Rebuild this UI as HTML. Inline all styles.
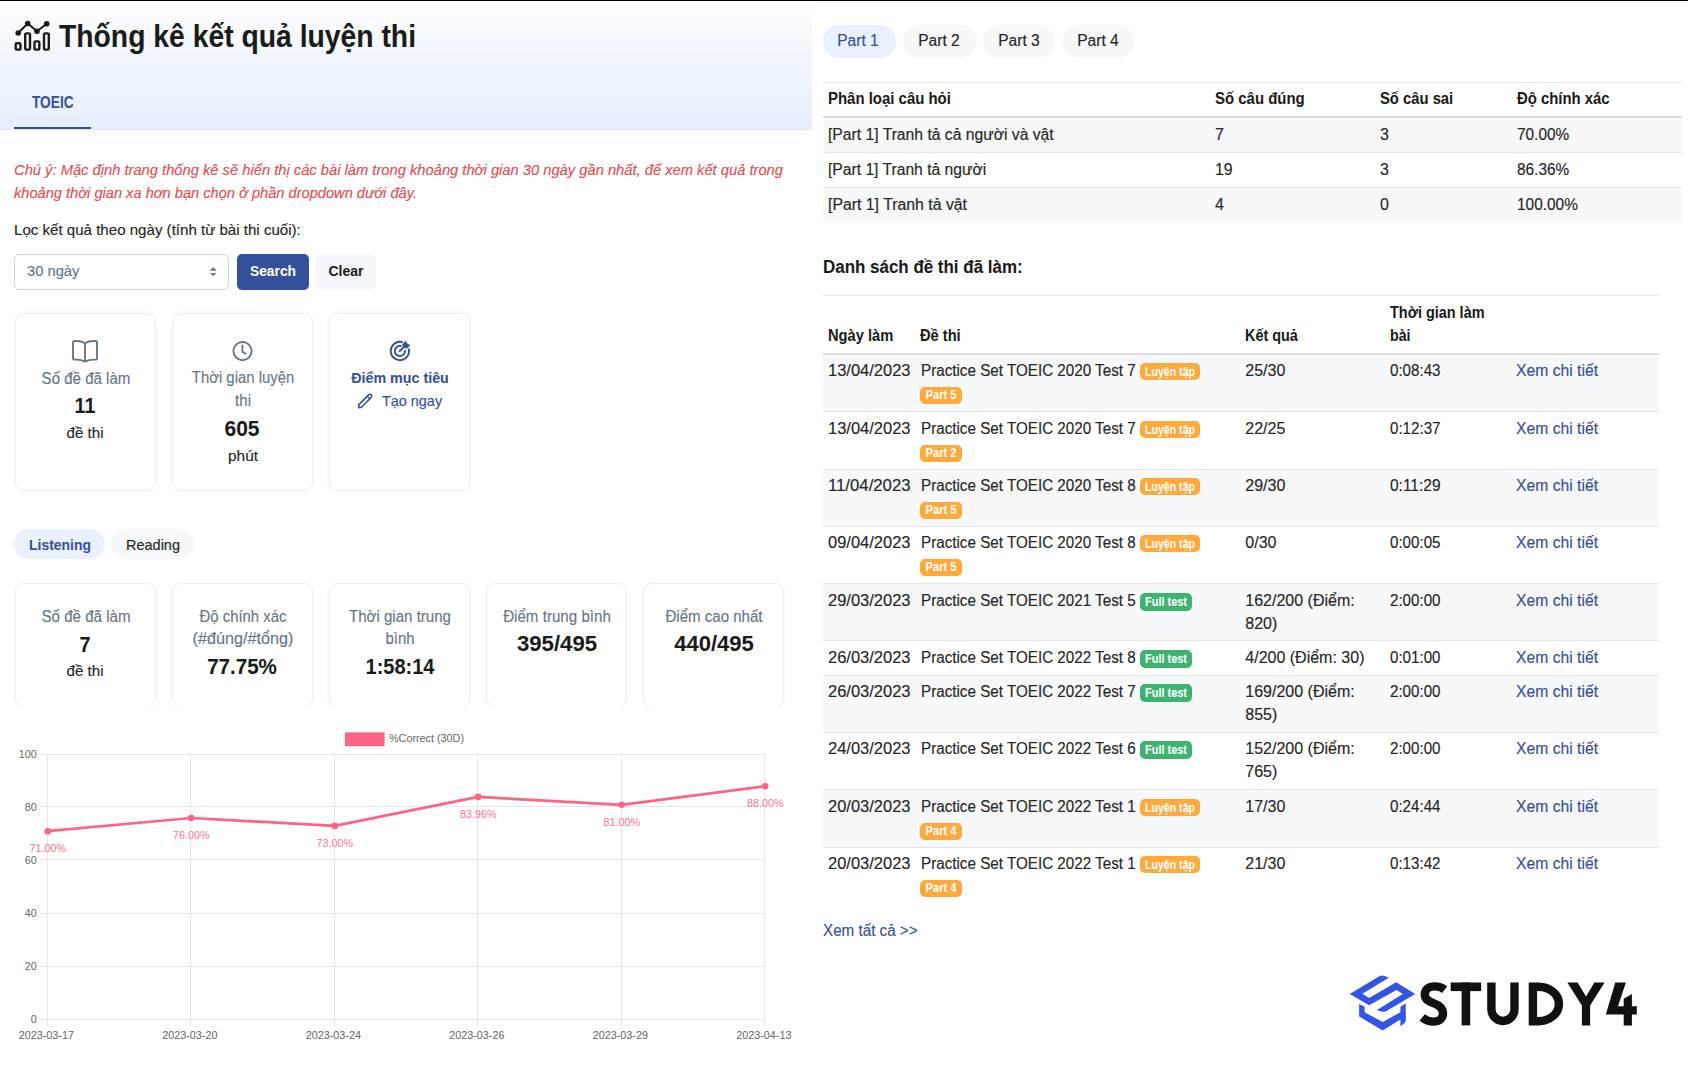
<!DOCTYPE html>
<html lang="vi"><head><meta charset="utf-8"><title>Thống kê kết quả luyện thi</title>
<style>
html,body{margin:0;padding:0;background:#fff;}
body{width:1688px;height:1079px;position:relative;overflow:hidden;font-family:"Liberation Sans", sans-serif;}
.b{position:absolute;display:block;}
.t{position:absolute;white-space:nowrap;display:block;-webkit-text-stroke:0.15px currentColor;}
.t[style*="font-weight:bold"]{-webkit-text-stroke:0.05px currentColor;}
</style></head><body>
<div class="b" style="left:0px;top:0px;width:1688px;height:1px;background:#000"></div>
<div class="b" style="left:0px;top:1px;width:812px;height:128px;background:linear-gradient(180deg,#fdfeff 0%,#f1f6fe 45%,#e5effd 100%);"></div>
<div class="b" style="left:0px;top:129px;width:812px;height:1px;background:#e3e6ea"></div>
<div class="b" style="left:14px;top:127px;width:77px;height:2px;background:#35509a"></div>
<svg class="b" style="left:12px;top:18px" width="42" height="36" viewBox="12 18 42 36">
<g fill="none" stroke="#1a1a1a" stroke-width="2" stroke-linejoin="round">
<polyline points="18.2,33 27.7,23.5 37,31.2 46.7,23.7"/>
<rect x="15.7" y="43.2" width="4.8" height="6.4" rx="1.2" stroke-width="2.4"/>
<rect x="25.2" y="33.4" width="4.8" height="16.2" rx="1.2" stroke-width="2.4"/>
<rect x="34.5" y="41.4" width="4.8" height="8.2" rx="1.2" stroke-width="2.4"/>
<rect x="44" y="33.4" width="4.8" height="16.2" rx="1.2" stroke-width="2.4"/>
</g>
<g fill="#1a1a1a"><circle cx="18.2" cy="33" r="2.8"/><circle cx="27.7" cy="23.5" r="2.8"/><circle cx="37" cy="31.2" r="2.8"/><circle cx="46.7" cy="23.7" r="2.8"/></g>
</svg>
<span id="t1" class="t" style="left:58.60px;top:20px;font-size:32px;line-height:32px;color:#1a1a1a;font-weight:bold;transform-origin:0 0;transform:scaleX(0.8846);">Thống kê kết quả luyện thi</span>
<span id="t2" class="t" style="left:32.30px;top:95px;font-size:16px;line-height:16px;color:#35509a;font-weight:bold;transform-origin:0 0;transform:scaleX(0.8558);">TOEIC</span>
<span id="t3" class="t" style="left:14.00px;top:162px;font-size:15px;line-height:15px;color:#e64c53;font-style:italic;transform-origin:0 0;transform:scaleX(0.9812);">Chú ý: Mặc định trang thống kê sẽ hiển thị các bài làm trong khoảng thời gian 30 ngày gần nhất, để xem kết quả trong</span>
<span id="t4" class="t" style="left:14.00px;top:185px;font-size:15px;line-height:15px;color:#e64c53;font-style:italic;transform-origin:0 0;transform:scaleX(0.9751);">khoảng thời gian xa hơn bạn chọn ở phần dropdown dưới đây.</span>
<span id="t5" class="t" style="left:14.00px;top:222px;font-size:15px;line-height:15px;color:#262626;transform-origin:0 0;transform:scaleX(1.0055);">Lọc kết quả theo ngày (tính từ bài thi cuối):</span>
<div class="b" style="left:14px;top:254px;width:215px;height:36px;background:#fff;border:1px solid #ccd2da;border-radius:5px;box-sizing:border-box"></div>
<span id="t6" class="t" style="left:26.90px;top:263px;font-size:15px;line-height:15px;color:#677788;transform-origin:0 0;transform:scaleX(0.9814);">30 ngày</span>
<svg class="b" style="left:208px;top:265px" width="10" height="13" viewBox="0 0 10 13">
<path d="M1.7 5.8 L5.2 2.1 L8.8 5.8 Z M1.9 7.9 L5.2 11.3 L8.6 7.9 Z" fill="#6a7d94"/></svg>
<div class="b" style="left:237px;top:254px;width:72px;height:36px;background:#35509a;border-radius:5px"></div>
<span id="t7" class="t" style="left:273.00px;top:263px;font-size:15px;line-height:15px;color:#fff;font-weight:bold;transform:translateX(-50%) scaleX(0.9191);">Search</span>
<div class="b" style="left:316px;top:254px;width:60px;height:36px;background:#f5f8fc;border-radius:5px"></div>
<span id="t8" class="t" style="left:346.00px;top:263px;font-size:15px;line-height:15px;color:#1e1e1e;font-weight:bold;transform:translateX(-50%) scaleX(0.9326);">Clear</span>
<div class="b" style="left:15px;top:313px;width:141px;height:178px;background:#fff;border:1px solid #eeeeee;border-radius:9px;box-sizing:border-box;box-shadow:0 0 5px rgba(0,0,0,0.04)"></div>
<div class="b" style="left:172px;top:313px;width:141px;height:178px;background:#fff;border:1px solid #eeeeee;border-radius:9px;box-sizing:border-box;box-shadow:0 0 5px rgba(0,0,0,0.04)"></div>
<div class="b" style="left:329px;top:313px;width:141px;height:178px;background:#fff;border:1px solid #eeeeee;border-radius:9px;box-sizing:border-box;box-shadow:0 0 5px rgba(0,0,0,0.04)"></div>
<svg class="b" style="left:70px;top:339px" width="30" height="24" viewBox="0 0 30 24">
<path d="M15 4.2 C12.5 2.6 9.5 2 6.8 2 H4.6 Q3 2 3 3.6 V19 Q3 20.6 4.6 20.6 H6.8 C9.5 20.6 12.5 21.2 15 22.6 C17.5 21.2 20.5 20.6 23.2 20.6 H25.4 Q27 20.6 27 19 V3.6 Q27 2 25.4 2 H23.2 C20.5 2 17.5 2.6 15 4.2 Z M15 4.2 V22" fill="none" stroke="#677788" stroke-width="1.9" stroke-linejoin="round"/></svg>
<span id="t9" class="t" style="left:85.50px;top:371px;font-size:16px;line-height:16px;color:#677788;transform:translateX(-50%) scaleX(0.9419);">Số đề đã làm</span>
<span id="t10" class="t" style="left:85.00px;top:395px;font-size:22px;line-height:22px;color:#1a1a1a;font-weight:bold;transform:translateX(-50%) scaleX(0.8940);">11</span>
<span id="t11" class="t" style="left:85.30px;top:425px;font-size:15px;line-height:15px;color:#262626;transform:translateX(-50%) scaleX(1.0081);">đề thi</span>
<svg class="b" style="left:230px;top:339px" width="25" height="25" viewBox="0 0 25 25">
<circle cx="12.5" cy="12.1" r="9.1" fill="none" stroke="#677788" stroke-width="1.9"/>
<path d="M12.4 6.5 V12.7 L15.5 14.8" fill="none" stroke="#677788" stroke-width="1.9" stroke-linecap="round" stroke-linejoin="round"/></svg>
<span id="t12" class="t" style="left:243.10px;top:370px;font-size:16px;line-height:16px;color:#677788;transform:translateX(-50%) scaleX(0.9300);">Thời gian luyện</span>
<span id="t13" class="t" style="left:242.50px;top:393px;font-size:16px;line-height:16px;color:#677788;transform:translateX(-50%) scaleX(0.9464);">thi</span>
<span id="t14" class="t" style="left:242.30px;top:418px;font-size:22px;line-height:22px;color:#1a1a1a;font-weight:bold;transform:translateX(-50%) scaleX(0.9532);">605</span>
<span id="t15" class="t" style="left:242.50px;top:448px;font-size:15px;line-height:15px;color:#262626;transform:translateX(-50%) scaleX(1.0273);">phút</span>
<svg class="b" style="left:387px;top:338px" width="26" height="26" viewBox="0 0 26 26">
<g fill="none" stroke="#35509a" stroke-width="1.85" stroke-linecap="round">
<path d="M21.9 11.09 A9.2 9.2 0 1 1 14.81 4.0"/>
<path d="M17.98 12.56 A5.1 5.1 0 1 1 13.79 7.98"/>
<path d="M12.7 13 L17.3 8.6"/>
</g>
<path d="M18.5 3.2 L19.9 5.5 L22.9 7.4 L19.9 10.3 L16.2 9.1 L15.6 6.3 Z" fill="#35509a" stroke="#35509a" stroke-width="0.6" stroke-linejoin="round"/>
</svg>
<span id="t16" class="t" style="left:399.50px;top:370px;font-size:15px;line-height:15px;color:#35509a;font-weight:bold;transform:translateX(-50%) scaleX(0.9529);">Điểm mục tiêu</span>
<svg class="b" style="left:355px;top:391px" width="20" height="20" viewBox="0 0 20 20">
<path d="M3.6 16.6 L3.9 13.6 L13.6 3.9 Q14.9 2.6 16.2 3.9 Q17.5 5.2 16.2 6.5 L6.5 16.2 Z M12.2 5.3 L14.8 7.9" fill="none" stroke="#35509a" stroke-width="1.6" stroke-linejoin="round"/></svg>
<span id="t17" class="t" style="left:381.70px;top:393px;font-size:15px;line-height:15px;color:#35509a;transform-origin:0 0;transform:scaleX(0.9609);">Tạo ngay</span>
<div class="b" style="left:14px;top:529px;width:91px;height:30px;background:#e8f1fd;border-radius:15px"></div>
<span id="t18" class="t" style="left:59.50px;top:537px;font-size:15px;line-height:15px;color:#35509a;font-weight:bold;transform:translateX(-50%) scaleX(0.9269);">Listening</span>
<div class="b" style="left:111px;top:529px;width:83px;height:30px;background:#f6f8fa;border-radius:15px"></div>
<span id="t19" class="t" style="left:152.50px;top:537px;font-size:15px;line-height:15px;color:#262626;transform:translateX(-50%) scaleX(0.9662);">Reading</span>
<div class="b" style="left:0;top:570px;width:813px;height:136px;overflow:hidden">
<div class="b" style="left:15px;top:13px;width:141px;height:124px;background:#fff;border:1px solid #eeeeee;border-radius:9px;box-sizing:border-box;box-shadow:0 0 5px rgba(0,0,0,0.04)"></div>
<div class="b" style="left:172px;top:13px;width:141px;height:124px;background:#fff;border:1px solid #eeeeee;border-radius:9px;box-sizing:border-box;box-shadow:0 0 5px rgba(0,0,0,0.04)"></div>
<div class="b" style="left:329px;top:13px;width:141px;height:124px;background:#fff;border:1px solid #eeeeee;border-radius:9px;box-sizing:border-box;box-shadow:0 0 5px rgba(0,0,0,0.04)"></div>
<div class="b" style="left:486px;top:13px;width:141px;height:124px;background:#fff;border:1px solid #eeeeee;border-radius:9px;box-sizing:border-box;box-shadow:0 0 5px rgba(0,0,0,0.04)"></div>
<div class="b" style="left:643px;top:13px;width:141px;height:124px;background:#fff;border:1px solid #eeeeee;border-radius:9px;box-sizing:border-box;box-shadow:0 0 5px rgba(0,0,0,0.04)"></div>
</div>
<span id="t20" class="t" style="left:85.50px;top:609px;font-size:16px;line-height:16px;color:#677788;transform:translateX(-50%) scaleX(0.9429);">Số đề đã làm</span>
<span id="t21" class="t" style="left:85.00px;top:634px;font-size:22px;line-height:22px;color:#1a1a1a;font-weight:bold;transform:translateX(-50%) scaleX(0.8980);">7</span>
<span id="t22" class="t" style="left:85.30px;top:663px;font-size:15px;line-height:15px;color:#262626;transform:translateX(-50%) scaleX(1.0081);">đề thi</span>
<span id="t23" class="t" style="left:242.50px;top:609px;font-size:16px;line-height:16px;color:#677788;transform:translateX(-50%) scaleX(0.9316);">Độ chính xác</span>
<span id="t24" class="t" style="left:242.70px;top:631px;font-size:16px;line-height:16px;color:#677788;transform:translateX(-50%) scaleX(1.0116);">(#đúng/#tổng)</span>
<span id="t25" class="t" style="left:242.20px;top:656px;font-size:22px;line-height:22px;color:#1a1a1a;font-weight:bold;transform:translateX(-50%) scaleX(0.9340);">77.75%</span>
<span id="t26" class="t" style="left:399.50px;top:609px;font-size:16px;line-height:16px;color:#677788;transform:translateX(-50%) scaleX(0.9416);">Thời gian trung</span>
<span id="t27" class="t" style="left:399.50px;top:631px;font-size:16px;line-height:16px;color:#677788;transform:translateX(-50%) scaleX(0.9313);">bình</span>
<span id="t28" class="t" style="left:399.50px;top:656px;font-size:22px;line-height:22px;color:#1a1a1a;font-weight:bold;transform:translateX(-50%) scaleX(0.9098);">1:58:14</span>
<span id="t29" class="t" style="left:557.20px;top:609px;font-size:16px;line-height:16px;color:#677788;transform:translateX(-50%) scaleX(0.9460);">Điểm trung bình</span>
<span id="t30" class="t" style="left:557.00px;top:633px;font-size:22px;line-height:22px;color:#1a1a1a;font-weight:bold;transform:translateX(-50%) scaleX(1.0059);">395/495</span>
<span id="t31" class="t" style="left:714.30px;top:609px;font-size:16px;line-height:16px;color:#677788;transform:translateX(-50%) scaleX(0.9411);">Điểm cao nhất</span>
<span id="t32" class="t" style="left:714.00px;top:633px;font-size:22px;line-height:22px;color:#1a1a1a;font-weight:bold;transform:translateX(-50%) scaleX(1.0009);">440/495</span>
<svg class="b" style="left:0;top:720px" width="813" height="359" viewBox="0 720 813 359">
<g stroke="#e6e6e6" stroke-width="1" shape-rendering="crispEdges">
<line x1="39.5" y1="1019.5" x2="765.5" y2="1019.5"/>
<line x1="39.5" y1="966.5" x2="765.5" y2="966.5"/>
<line x1="39.5" y1="913.5" x2="765.5" y2="913.5"/>
<line x1="39.5" y1="859.5" x2="765.5" y2="859.5"/>
<line x1="39.5" y1="806.5" x2="765.5" y2="806.5"/>
<line x1="39.5" y1="754.5" x2="765.5" y2="754.5"/>
<line x1="47.5" y1="754.5" x2="47.5" y2="1026"/>
<line x1="190.5" y1="754.5" x2="190.5" y2="1026"/>
<line x1="334.5" y1="754.5" x2="334.5" y2="1026"/>
<line x1="477.5" y1="754.5" x2="477.5" y2="1026"/>
<line x1="621.5" y1="754.5" x2="621.5" y2="1026"/>
<line x1="764.5" y1="754.5" x2="764.5" y2="1026"/>
</g>
<rect x="345" y="732.4" width="39.6" height="13.8" fill="#ff6384"/>
<text x="389" y="741.8" font-family="Liberation Sans" font-size="10.8" fill="#666">%Correct (30D)</text>
<text x="36.7" y="1022.8" text-anchor="end" font-family="Liberation Sans" font-size="10.8" fill="#666">0</text>
<text x="36.7" y="969.9" text-anchor="end" font-family="Liberation Sans" font-size="10.8" fill="#666">20</text>
<text x="36.7" y="917.0" text-anchor="end" font-family="Liberation Sans" font-size="10.8" fill="#666">40</text>
<text x="36.7" y="864.1" text-anchor="end" font-family="Liberation Sans" font-size="10.8" fill="#666">60</text>
<text x="36.7" y="811.2" text-anchor="end" font-family="Liberation Sans" font-size="10.8" fill="#666">80</text>
<text x="36.7" y="758.3" text-anchor="end" font-family="Liberation Sans" font-size="10.8" fill="#666">100</text>
<text x="46.3" y="1038.8" text-anchor="middle" font-family="Liberation Sans" font-size="10.8" fill="#666">2023-03-17</text>
<text x="189.8" y="1038.8" text-anchor="middle" font-family="Liberation Sans" font-size="10.8" fill="#666">2023-03-20</text>
<text x="333.3" y="1038.8" text-anchor="middle" font-family="Liberation Sans" font-size="10.8" fill="#666">2023-03-24</text>
<text x="476.8" y="1038.8" text-anchor="middle" font-family="Liberation Sans" font-size="10.8" fill="#666">2023-03-26</text>
<text x="620.3" y="1038.8" text-anchor="middle" font-family="Liberation Sans" font-size="10.8" fill="#666">2023-03-29</text>
<text x="763.8" y="1038.8" text-anchor="middle" font-family="Liberation Sans" font-size="10.8" fill="#666">2023-04-13</text>
<polyline points="47.7,831.2 191.2,818.0 334.7,825.9 478.2,796.9 621.7,804.8 765.2,786.2" fill="none" stroke="#ff6384" stroke-width="2.7" stroke-linejoin="round"/>
<circle cx="47.7" cy="831.2" r="3.3" fill="#ff6384"/>
<text x="47.7" y="852.2" text-anchor="middle" font-family="Liberation Sans" font-size="10.8" fill="#ff6f8e">71.00%</text>
<circle cx="191.2" cy="818.0" r="3.3" fill="#ff6384"/>
<text x="191.2" y="839.0" text-anchor="middle" font-family="Liberation Sans" font-size="10.8" fill="#ff6f8e">76.00%</text>
<circle cx="334.7" cy="825.9" r="3.3" fill="#ff6384"/>
<text x="334.7" y="846.9" text-anchor="middle" font-family="Liberation Sans" font-size="10.8" fill="#ff6f8e">73.00%</text>
<circle cx="478.2" cy="796.9" r="3.3" fill="#ff6384"/>
<text x="478.2" y="817.9" text-anchor="middle" font-family="Liberation Sans" font-size="10.8" fill="#ff6f8e">83.96%</text>
<circle cx="621.7" cy="804.8" r="3.3" fill="#ff6384"/>
<text x="621.7" y="825.8" text-anchor="middle" font-family="Liberation Sans" font-size="10.8" fill="#ff6f8e">81.00%</text>
<circle cx="765.2" cy="786.2" r="3.3" fill="#ff6384"/>
<text x="765.2" y="807.2" text-anchor="middle" font-family="Liberation Sans" font-size="10.8" fill="#ff6f8e">88.00%</text>
</svg>
<div class="b" style="left:823px;top:25px;width:73px;height:32.5px;background:#e8f1fd;border-radius:16px"></div>
<span id="t33" class="t" style="left:858.30px;top:33px;font-size:16px;line-height:16px;color:#35509a;transform:translateX(-50%) scaleX(0.9722);">Part 1</span>
<div class="b" style="left:903px;top:25px;width:72.5px;height:32.5px;background:#f6f8fa;border-radius:16px"></div>
<span id="t34" class="t" style="left:939.25px;top:33px;font-size:16px;line-height:16px;color:#262626;transform:translateX(-50%) scaleX(0.9722);">Part 2</span>
<div class="b" style="left:983px;top:25px;width:72px;height:32.5px;background:#f6f8fa;border-radius:16px"></div>
<span id="t35" class="t" style="left:1019.00px;top:33px;font-size:16px;line-height:16px;color:#262626;transform:translateX(-50%) scaleX(0.9722);">Part 3</span>
<div class="b" style="left:1062px;top:25px;width:72px;height:32.5px;background:#f6f8fa;border-radius:16px"></div>
<span id="t36" class="t" style="left:1098.00px;top:33px;font-size:16px;line-height:16px;color:#262626;transform:translateX(-50%) scaleX(0.9722);">Part 4</span>
<div class="b" style="left:823px;top:82px;width:859px;height:1px;background:#e8e8e8"></div>
<span id="t37" class="t" style="left:827.50px;top:91px;font-size:16px;line-height:16px;color:#1a1a1a;font-weight:bold;transform-origin:0 0;transform:scaleX(0.9340);">Phân loại câu hỏi</span>
<span id="t38" class="t" style="left:1215.00px;top:91px;font-size:16px;line-height:16px;color:#1a1a1a;font-weight:bold;transform-origin:0 0;transform:scaleX(0.9344);">Số câu đúng</span>
<span id="t39" class="t" style="left:1379.80px;top:91px;font-size:16px;line-height:16px;color:#1a1a1a;font-weight:bold;transform-origin:0 0;transform:scaleX(0.9248);">Số câu sai</span>
<span id="t40" class="t" style="left:1517.10px;top:91px;font-size:16px;line-height:16px;color:#1a1a1a;font-weight:bold;transform-origin:0 0;transform:scaleX(0.9299);">Độ chính xác</span>
<div class="b" style="left:823px;top:116px;width:859px;height:2px;background:#dcdcdc"></div>
<div class="b" style="left:823px;top:118px;width:859px;height:34.5px;background:#f7f8fa"></div>
<div class="b" style="left:823px;top:152px;width:859px;height:1px;background:#e5e5e5"></div>
<div class="b" style="left:823px;top:186.5px;width:859px;height:1px;background:#e5e5e5"></div>
<div class="b" style="left:823px;top:187.5px;width:859px;height:34px;background:#f7f8fa"></div>
<span id="t41" class="t" style="left:827.50px;top:127px;font-size:16px;line-height:16px;color:#262626;transform-origin:0 0;transform:scaleX(0.9804);">[Part 1] Tranh tả cả người và vật</span>
<span id="t42" class="t" style="left:1215.00px;top:127px;font-size:16px;line-height:16px;color:#262626;">7</span>
<span id="t43" class="t" style="left:1380.00px;top:127px;font-size:16px;line-height:16px;color:#262626;">3</span>
<span id="t44" class="t" style="left:1517.10px;top:127px;font-size:16px;line-height:16px;color:#262626;transform-origin:0 0;transform:scaleX(0.9619);">70.00%</span>
<span id="t45" class="t" style="left:827.50px;top:162px;font-size:16px;line-height:16px;color:#262626;transform-origin:0 0;transform:scaleX(0.9781);">[Part 1] Tranh tả người</span>
<span id="t46" class="t" style="left:1215.00px;top:162px;font-size:16px;line-height:16px;color:#262626;transform-origin:0 0;transform:scaleX(0.9889);">19</span>
<span id="t47" class="t" style="left:1380.00px;top:162px;font-size:16px;line-height:16px;color:#262626;">3</span>
<span id="t48" class="t" style="left:1517.10px;top:162px;font-size:16px;line-height:16px;color:#262626;transform-origin:0 0;transform:scaleX(0.9619);">86.36%</span>
<span id="t49" class="t" style="left:827.50px;top:197px;font-size:16px;line-height:16px;color:#262626;transform-origin:0 0;transform:scaleX(0.9892);">[Part 1] Tranh tả vật</span>
<span id="t50" class="t" style="left:1215.00px;top:197px;font-size:16px;line-height:16px;color:#262626;">4</span>
<span id="t51" class="t" style="left:1380.00px;top:197px;font-size:16px;line-height:16px;color:#262626;">0</span>
<span id="t52" class="t" style="left:1517.10px;top:197px;font-size:16px;line-height:16px;color:#262626;transform-origin:0 0;transform:scaleX(0.9640);">100.00%</span>
<span id="t53" class="t" style="left:823.00px;top:258px;font-size:18px;line-height:18px;color:#1a1a1a;font-weight:bold;transform-origin:0 0;transform:scaleX(0.9413);">Danh sách đề thi đã làm:</span>
<div class="b" style="left:823px;top:295px;width:836px;height:1px;background:#e8e8e8"></div>
<span id="t54" class="t" style="left:827.50px;top:328px;font-size:16px;line-height:16px;color:#1a1a1a;font-weight:bold;transform-origin:0 0;transform:scaleX(0.9179);">Ngày làm</span>
<span id="t55" class="t" style="left:920.00px;top:328px;font-size:16px;line-height:16px;color:#1a1a1a;font-weight:bold;transform-origin:0 0;transform:scaleX(0.9156);">Đề thi</span>
<span id="t56" class="t" style="left:1245.30px;top:328px;font-size:16px;line-height:16px;color:#1a1a1a;font-weight:bold;transform-origin:0 0;transform:scaleX(0.8999);">Kết quả</span>
<span id="t57" class="t" style="left:1389.90px;top:305px;font-size:16px;line-height:16px;color:#1a1a1a;font-weight:bold;transform-origin:0 0;transform:scaleX(0.9024);">Thời gian làm</span>
<span id="t58" class="t" style="left:1389.90px;top:328px;font-size:16px;line-height:16px;color:#1a1a1a;font-weight:bold;transform-origin:0 0;transform:scaleX(0.8865);">bài</span>
<div class="b" style="left:823px;top:353px;width:836px;height:2px;background:#dcdcdc"></div>
<div class="b" style="left:823px;top:355px;width:836px;height:56.5px;background:#f7f8fa"></div>
<span id="t59" class="t" style="left:827.50px;top:363px;font-size:16px;line-height:16px;color:#262626;transform-origin:0 0;transform:scaleX(1.0302);">13/04/2023</span>
<span id="t60" class="t" style="left:920.50px;top:363px;font-size:16px;line-height:16px;color:#262626;transform-origin:0 0;transform:scaleX(0.9504);">Practice Set TOEIC 2020 Test 7</span>
<div class="b" style="left:1140px;top:363.1px;width:60.2px;height:17.2px;background:#ffa93b;border-radius:5px"></div>
<span id="t61" class="t" style="left:1170.30px;top:366px;font-size:12px;line-height:12px;color:#fff;font-weight:bold;transform:translateX(-50%) scaleX(0.8823);">Luyện tập</span>
<div class="b" style="left:920px;top:386.8px;width:41.5px;height:16.8px;background:#ffa93b;border-radius:5px"></div>
<span id="t62" class="t" style="left:940.60px;top:389px;font-size:12px;line-height:12px;color:#fff;font-weight:bold;transform:translateX(-50%) scaleX(0.9293);">Part 5</span>
<span id="t63" class="t" style="left:1245.30px;top:363px;font-size:16px;line-height:16px;color:#262626;">25/30</span>
<span id="t64" class="t" style="left:1389.80px;top:363px;font-size:16px;line-height:16px;color:#262626;transform-origin:0 0;transform:scaleX(0.9459);">0:08:43</span>
<span id="t65" class="t" style="left:1516.40px;top:363px;font-size:16px;line-height:16px;color:#35509a;transform-origin:0 0;transform:scaleX(0.9809);">Xem chi tiết</span>
<div class="b" style="left:823px;top:411px;width:836px;height:1px;background:#e5e5e5"></div>
<span id="t66" class="t" style="left:827.50px;top:421px;font-size:16px;line-height:16px;color:#262626;transform-origin:0 0;transform:scaleX(1.0302);">13/04/2023</span>
<span id="t67" class="t" style="left:920.50px;top:421px;font-size:16px;line-height:16px;color:#262626;transform-origin:0 0;transform:scaleX(0.9504);">Practice Set TOEIC 2020 Test 7</span>
<div class="b" style="left:1140px;top:421.1px;width:60.2px;height:17.2px;background:#ffa93b;border-radius:5px"></div>
<span id="t68" class="t" style="left:1170.30px;top:424px;font-size:12px;line-height:12px;color:#fff;font-weight:bold;transform:translateX(-50%) scaleX(0.8823);">Luyện tập</span>
<div class="b" style="left:920px;top:444.8px;width:41.5px;height:16.8px;background:#ffa93b;border-radius:5px"></div>
<span id="t69" class="t" style="left:940.60px;top:447px;font-size:12px;line-height:12px;color:#fff;font-weight:bold;transform:translateX(-50%) scaleX(0.9293);">Part 2</span>
<span id="t70" class="t" style="left:1245.30px;top:421px;font-size:16px;line-height:16px;color:#262626;">22/25</span>
<span id="t71" class="t" style="left:1389.80px;top:421px;font-size:16px;line-height:16px;color:#262626;transform-origin:0 0;transform:scaleX(0.9459);">0:12:37</span>
<span id="t72" class="t" style="left:1516.40px;top:421px;font-size:16px;line-height:16px;color:#35509a;transform-origin:0 0;transform:scaleX(0.9809);">Xem chi tiết</span>
<div class="b" style="left:823px;top:469px;width:836px;height:57.39999999999998px;background:#f7f8fa"></div>
<div class="b" style="left:823px;top:469px;width:836px;height:1px;background:#e5e5e5"></div>
<span id="t73" class="t" style="left:827.50px;top:478px;font-size:16px;line-height:16px;color:#262626;transform-origin:0 0;transform:scaleX(1.0458);">11/04/2023</span>
<span id="t74" class="t" style="left:920.50px;top:478px;font-size:16px;line-height:16px;color:#262626;transform-origin:0 0;transform:scaleX(0.9504);">Practice Set TOEIC 2020 Test 8</span>
<div class="b" style="left:1140px;top:478.1px;width:60.2px;height:17.2px;background:#ffa93b;border-radius:5px"></div>
<span id="t75" class="t" style="left:1170.30px;top:481px;font-size:12px;line-height:12px;color:#fff;font-weight:bold;transform:translateX(-50%) scaleX(0.8823);">Luyện tập</span>
<div class="b" style="left:920px;top:501.8px;width:41.5px;height:16.8px;background:#ffa93b;border-radius:5px"></div>
<span id="t76" class="t" style="left:940.60px;top:504px;font-size:12px;line-height:12px;color:#fff;font-weight:bold;transform:translateX(-50%) scaleX(0.9293);">Part 5</span>
<span id="t77" class="t" style="left:1245.30px;top:478px;font-size:16px;line-height:16px;color:#262626;">29/30</span>
<span id="t78" class="t" style="left:1389.80px;top:478px;font-size:16px;line-height:16px;color:#262626;transform-origin:0 0;transform:scaleX(0.9674);">0:11:29</span>
<span id="t79" class="t" style="left:1516.40px;top:478px;font-size:16px;line-height:16px;color:#35509a;transform-origin:0 0;transform:scaleX(0.9809);">Xem chi tiết</span>
<div class="b" style="left:823px;top:526px;width:836px;height:1px;background:#e5e5e5"></div>
<span id="t80" class="t" style="left:827.50px;top:535px;font-size:16px;line-height:16px;color:#262626;transform-origin:0 0;transform:scaleX(1.0302);">09/04/2023</span>
<span id="t81" class="t" style="left:920.50px;top:535px;font-size:16px;line-height:16px;color:#262626;transform-origin:0 0;transform:scaleX(0.9504);">Practice Set TOEIC 2020 Test 8</span>
<div class="b" style="left:1140px;top:535.1px;width:60.2px;height:17.2px;background:#ffa93b;border-radius:5px"></div>
<span id="t82" class="t" style="left:1170.30px;top:538px;font-size:12px;line-height:12px;color:#fff;font-weight:bold;transform:translateX(-50%) scaleX(0.8823);">Luyện tập</span>
<div class="b" style="left:920px;top:558.8px;width:41.5px;height:16.8px;background:#ffa93b;border-radius:5px"></div>
<span id="t83" class="t" style="left:940.60px;top:561px;font-size:12px;line-height:12px;color:#fff;font-weight:bold;transform:translateX(-50%) scaleX(0.9293);">Part 5</span>
<span id="t84" class="t" style="left:1245.30px;top:535px;font-size:16px;line-height:16px;color:#262626;">0/30</span>
<span id="t85" class="t" style="left:1389.80px;top:535px;font-size:16px;line-height:16px;color:#262626;transform-origin:0 0;transform:scaleX(0.9459);">0:00:05</span>
<span id="t86" class="t" style="left:1516.40px;top:535px;font-size:16px;line-height:16px;color:#35509a;transform-origin:0 0;transform:scaleX(0.9809);">Xem chi tiết</span>
<div class="b" style="left:823px;top:583.3px;width:836px;height:57.10000000000002px;background:#f7f8fa"></div>
<div class="b" style="left:823px;top:583px;width:836px;height:1px;background:#e5e5e5"></div>
<span id="t87" class="t" style="left:827.50px;top:593px;font-size:16px;line-height:16px;color:#262626;transform-origin:0 0;transform:scaleX(1.0302);">29/03/2023</span>
<span id="t88" class="t" style="left:920.50px;top:593px;font-size:16px;line-height:16px;color:#262626;transform-origin:0 0;transform:scaleX(0.9504);">Practice Set TOEIC 2021 Test 5</span>
<div class="b" style="left:1140px;top:592.8px;width:52px;height:17.8px;background:#3cb46e;border-radius:5px"></div>
<span id="t89" class="t" style="left:1166.00px;top:596px;font-size:12px;line-height:12px;color:#fff;font-weight:bold;transform:translateX(-50%) scaleX(0.9127);">Full test</span>
<span id="t90" class="t" style="left:1245.30px;top:593px;font-size:16px;line-height:16px;color:#262626;">162/200 (Điểm:</span>
<span id="t91" class="t" style="left:1245.30px;top:616px;font-size:16px;line-height:16px;color:#262626;">820)</span>
<span id="t92" class="t" style="left:1389.80px;top:593px;font-size:16px;line-height:16px;color:#262626;transform-origin:0 0;transform:scaleX(0.9459);">2:00:00</span>
<span id="t93" class="t" style="left:1516.40px;top:593px;font-size:16px;line-height:16px;color:#35509a;transform-origin:0 0;transform:scaleX(0.9809);">Xem chi tiết</span>
<div class="b" style="left:823px;top:640px;width:836px;height:1px;background:#e5e5e5"></div>
<span id="t94" class="t" style="left:827.50px;top:650px;font-size:16px;line-height:16px;color:#262626;transform-origin:0 0;transform:scaleX(1.0302);">26/03/2023</span>
<span id="t95" class="t" style="left:920.50px;top:650px;font-size:16px;line-height:16px;color:#262626;transform-origin:0 0;transform:scaleX(0.9504);">Practice Set TOEIC 2022 Test 8</span>
<div class="b" style="left:1140px;top:650.3px;width:52px;height:17.8px;background:#3cb46e;border-radius:5px"></div>
<span id="t96" class="t" style="left:1166.00px;top:653px;font-size:12px;line-height:12px;color:#fff;font-weight:bold;transform:translateX(-50%) scaleX(0.9127);">Full test</span>
<span id="t97" class="t" style="left:1245.30px;top:650px;font-size:16px;line-height:16px;color:#262626;">4/200 (Điểm: 30)</span>
<span id="t98" class="t" style="left:1389.80px;top:650px;font-size:16px;line-height:16px;color:#262626;transform-origin:0 0;transform:scaleX(0.9459);">0:01:00</span>
<span id="t99" class="t" style="left:1516.40px;top:650px;font-size:16px;line-height:16px;color:#35509a;transform-origin:0 0;transform:scaleX(0.9809);">Xem chi tiết</span>
<div class="b" style="left:823px;top:675px;width:836px;height:57px;background:#f7f8fa"></div>
<div class="b" style="left:823px;top:675px;width:836px;height:1px;background:#e5e5e5"></div>
<span id="t100" class="t" style="left:827.50px;top:684px;font-size:16px;line-height:16px;color:#262626;transform-origin:0 0;transform:scaleX(1.0302);">26/03/2023</span>
<span id="t101" class="t" style="left:920.50px;top:684px;font-size:16px;line-height:16px;color:#262626;transform-origin:0 0;transform:scaleX(0.9504);">Practice Set TOEIC 2022 Test 7</span>
<div class="b" style="left:1140px;top:684.3px;width:52px;height:17.8px;background:#3cb46e;border-radius:5px"></div>
<span id="t102" class="t" style="left:1166.00px;top:687px;font-size:12px;line-height:12px;color:#fff;font-weight:bold;transform:translateX(-50%) scaleX(0.9127);">Full test</span>
<span id="t103" class="t" style="left:1245.30px;top:684px;font-size:16px;line-height:16px;color:#262626;">169/200 (Điểm:</span>
<span id="t104" class="t" style="left:1245.30px;top:707px;font-size:16px;line-height:16px;color:#262626;">855)</span>
<span id="t105" class="t" style="left:1389.80px;top:684px;font-size:16px;line-height:16px;color:#262626;transform-origin:0 0;transform:scaleX(0.9459);">2:00:00</span>
<span id="t106" class="t" style="left:1516.40px;top:684px;font-size:16px;line-height:16px;color:#35509a;transform-origin:0 0;transform:scaleX(0.9809);">Xem chi tiết</span>
<div class="b" style="left:823px;top:732px;width:836px;height:1px;background:#e5e5e5"></div>
<span id="t107" class="t" style="left:827.50px;top:741px;font-size:16px;line-height:16px;color:#262626;transform-origin:0 0;transform:scaleX(1.0302);">24/03/2023</span>
<span id="t108" class="t" style="left:920.50px;top:741px;font-size:16px;line-height:16px;color:#262626;transform-origin:0 0;transform:scaleX(0.9504);">Practice Set TOEIC 2022 Test 6</span>
<div class="b" style="left:1140px;top:741.3px;width:52px;height:17.8px;background:#3cb46e;border-radius:5px"></div>
<span id="t109" class="t" style="left:1166.00px;top:744px;font-size:12px;line-height:12px;color:#fff;font-weight:bold;transform:translateX(-50%) scaleX(0.9127);">Full test</span>
<span id="t110" class="t" style="left:1245.30px;top:741px;font-size:16px;line-height:16px;color:#262626;">152/200 (Điểm:</span>
<span id="t111" class="t" style="left:1245.30px;top:764px;font-size:16px;line-height:16px;color:#262626;">765)</span>
<span id="t112" class="t" style="left:1389.80px;top:741px;font-size:16px;line-height:16px;color:#262626;transform-origin:0 0;transform:scaleX(0.9459);">2:00:00</span>
<span id="t113" class="t" style="left:1516.40px;top:741px;font-size:16px;line-height:16px;color:#35509a;transform-origin:0 0;transform:scaleX(0.9809);">Xem chi tiết</span>
<div class="b" style="left:823px;top:789.4px;width:836px;height:58.0px;background:#f7f8fa"></div>
<div class="b" style="left:823px;top:789px;width:836px;height:1px;background:#e5e5e5"></div>
<span id="t114" class="t" style="left:827.50px;top:799px;font-size:16px;line-height:16px;color:#262626;transform-origin:0 0;transform:scaleX(1.0302);">20/03/2023</span>
<span id="t115" class="t" style="left:920.50px;top:799px;font-size:16px;line-height:16px;color:#262626;transform-origin:0 0;transform:scaleX(0.9504);">Practice Set TOEIC 2022 Test 1</span>
<div class="b" style="left:1140px;top:799.1px;width:60.2px;height:17.2px;background:#ffa93b;border-radius:5px"></div>
<span id="t116" class="t" style="left:1170.30px;top:802px;font-size:12px;line-height:12px;color:#fff;font-weight:bold;transform:translateX(-50%) scaleX(0.8823);">Luyện tập</span>
<div class="b" style="left:920px;top:822.8px;width:41.5px;height:16.8px;background:#ffa93b;border-radius:5px"></div>
<span id="t117" class="t" style="left:940.60px;top:825px;font-size:12px;line-height:12px;color:#fff;font-weight:bold;transform:translateX(-50%) scaleX(0.9293);">Part 4</span>
<span id="t118" class="t" style="left:1245.30px;top:799px;font-size:16px;line-height:16px;color:#262626;">17/30</span>
<span id="t119" class="t" style="left:1389.80px;top:799px;font-size:16px;line-height:16px;color:#262626;transform-origin:0 0;transform:scaleX(0.9459);">0:24:44</span>
<span id="t120" class="t" style="left:1516.40px;top:799px;font-size:16px;line-height:16px;color:#35509a;transform-origin:0 0;transform:scaleX(0.9809);">Xem chi tiết</span>
<div class="b" style="left:823px;top:847px;width:836px;height:1px;background:#e5e5e5"></div>
<span id="t121" class="t" style="left:827.50px;top:856px;font-size:16px;line-height:16px;color:#262626;transform-origin:0 0;transform:scaleX(1.0302);">20/03/2023</span>
<span id="t122" class="t" style="left:920.50px;top:856px;font-size:16px;line-height:16px;color:#262626;transform-origin:0 0;transform:scaleX(0.9504);">Practice Set TOEIC 2022 Test 1</span>
<div class="b" style="left:1140px;top:856.1px;width:60.2px;height:17.2px;background:#ffa93b;border-radius:5px"></div>
<span id="t123" class="t" style="left:1170.30px;top:859px;font-size:12px;line-height:12px;color:#fff;font-weight:bold;transform:translateX(-50%) scaleX(0.8823);">Luyện tập</span>
<div class="b" style="left:920px;top:879.8px;width:41.5px;height:16.8px;background:#ffa93b;border-radius:5px"></div>
<span id="t124" class="t" style="left:940.60px;top:882px;font-size:12px;line-height:12px;color:#fff;font-weight:bold;transform:translateX(-50%) scaleX(0.9293);">Part 4</span>
<span id="t125" class="t" style="left:1245.30px;top:856px;font-size:16px;line-height:16px;color:#262626;">21/30</span>
<span id="t126" class="t" style="left:1389.80px;top:856px;font-size:16px;line-height:16px;color:#262626;transform-origin:0 0;transform:scaleX(0.9459);">0:13:42</span>
<span id="t127" class="t" style="left:1516.40px;top:856px;font-size:16px;line-height:16px;color:#35509a;transform-origin:0 0;transform:scaleX(0.9809);">Xem chi tiết</span>
<span id="t128" class="t" style="left:823.30px;top:923px;font-size:16px;line-height:16px;color:#35509a;transform-origin:0 0;transform:scaleX(0.9497);">Xem tất cả &gt;&gt;</span>
<svg class="b" style="left:1345px;top:970px" width="80" height="65" viewBox="0 0 1328 1079">
<g fill="#3355e6">
<path d="M80 400 L575 100 Q625 75 725 130 L290 395 L400 465 L850 205 L1165 400 L690 680 Q625 715 530 665 L960 400 L855 330 L400 585 Z"/>
<path d="M235 565 L325 612 L325 700 L625 865 L920 700 L920 610 L1008 555 L1010 830 Q1005 890 920 930 L920 820 L625 1005 L235 770 Z"/>
</g></svg>
<svg class="b" style="left:1410px;top:970px" width="240" height="70" viewBox="1410 970 240 70">
<g fill="#111111">
<rect x="1450.7" y="982.5" width="30.4" height="8.6"/>
<rect x="1461.6" y="982.5" width="8.6" height="42.9"/>
<polygon points="1567.3,982.5 1577.6,982.5 1586,996.5 1594.4,982.5 1604.6,982.5 1590.1,1005.5 1590.1,1025.4 1581.9,1025.4 1581.9,1005.5"/>
<polygon points="1615.3,982.5 1625.9,982.5 1618,1006.3 1623.7,1006.3 1623.7,998.8 1631.9,994 1631.9,1006.3 1636.8,1006.3 1636.8,1014.5 1631.9,1014.5 1631.9,1025.4 1623.7,1025.4 1623.7,1014.5 1605.8,1014.5"/>
</g>
<g fill="none" stroke="#111111" stroke-width="8.4">
<path d="M1491.4 982.5 V1009.4 A11.55 11.55 0 0 0 1514.5 1009.4 V982.5"/>
<path d="M1532.9 986.7 H1538.5 A20.3 17.15 0 0 1 1538.5 1021.2 H1532.9 Z" stroke-linejoin="miter"/>
<path d="M1444.6 989.6 C1441.5 987.2 1438.2 986.4 1434.6 986.4 C1428.6 986.4 1424.8 989.8 1424.8 994.4 C1424.8 999.6 1429.2 1001.6 1434 1003.4 C1439.6 1005.4 1443 1008.2 1443 1013.4 C1443 1018.4 1439.2 1021.6 1433.4 1021.6 C1429.4 1021.6 1425.6 1020.2 1422.2 1017.4"/>
</g>
</svg>
</body></html>
